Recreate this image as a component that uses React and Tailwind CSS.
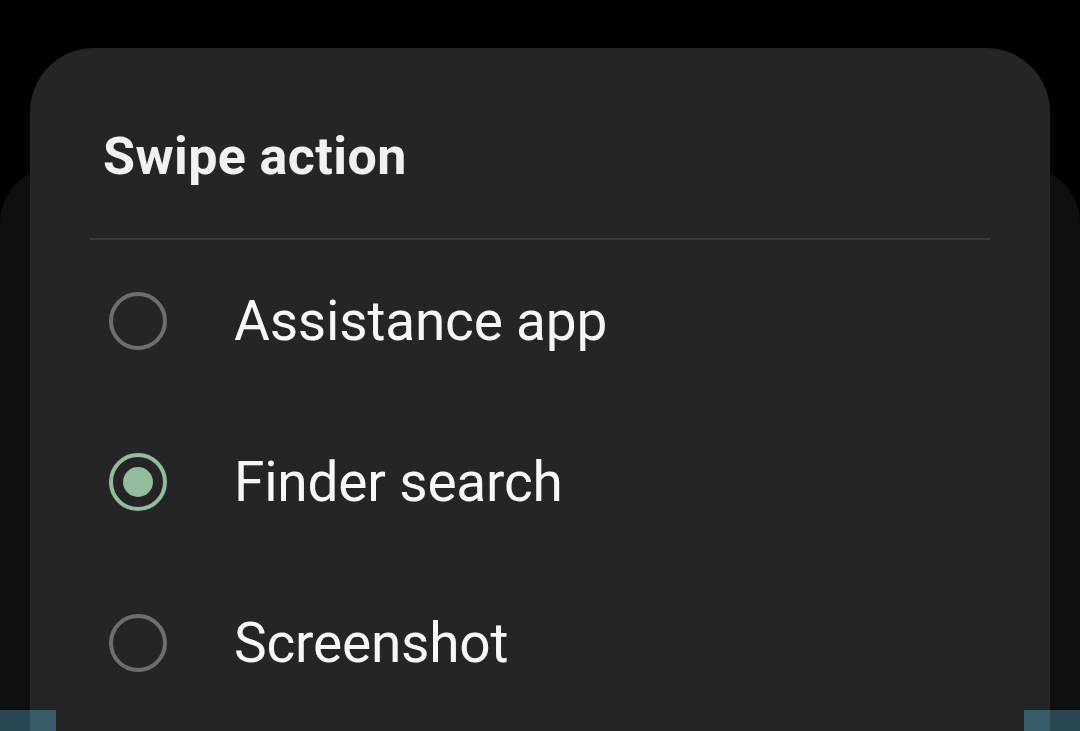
import React from "react"

const options = [
  { id: "assist", label: "Assistance app" },
  { id: "finder", label: "Finder search" },
  { id: "shot", label: "Screenshot" },
]

function Radio({ checked }) {
  if (checked) {
    return (
      <div className="w-[58px] h-[58px] rounded-full border-[4px] border-[#94bb9b] flex items-center justify-center shrink-0">
        <div className="w-[30px] h-[30px] rounded-full bg-[#94bb9b]" />
      </div>
    )
  }
  return <div className="w-[58px] h-[58px] rounded-full border-[4px] border-[#6e6e70] shrink-0" />
}

export default function App() {
  const selected = "finder"

  return (
    <div className="relative h-[731px] w-[1080px] overflow-hidden bg-black font-['Roboto',sans-serif]">
      {/* sheet behind the dialog */}
      <div className="absolute left-0 right-0 top-[167px] h-[700px] rounded-[56px] bg-[#0f0f0f]" />

      {/* dialog */}
      <div className="relative mx-[30px] mt-[48px] h-[800px] rounded-[64px] bg-[#252527]">
        <div className="pt-[79px] pl-[73px]">
          <h2 className="text-[52px] leading-[60px] font-bold text-[#f0f1f1] tracking-[0.4px]">Swipe action</h2>
        </div>
        <div className="mx-[60px] mt-[51px] h-[2px] bg-[#3a3a3c]" />

        <div className="flex flex-col">
          {options.map((opt) => (
            <div key={opt.id} className="flex items-center h-[161px] pl-[79px]">
              <Radio checked={opt.id === selected} />
              <span className="ml-[67px] text-[55px] leading-[60px] text-[#f7f7f7] tracking-[-0.2px]">{opt.label}</span>
            </div>
          ))}
        </div>
      </div>

      {/* teal overlays at the bottom corners */}
      <div className="absolute bottom-0 left-0 h-[21px] w-[56px] flex">
        <div className="w-[30px] bg-[#274650]" />
        <div className="flex-1 bg-[#375b68]" />
      </div>
      <div className="absolute bottom-0 right-0 h-[21px] w-[56px] flex">
        <div className="flex-1 bg-[#375b68]" />
        <div className="w-[30px] bg-[#274650]" />
      </div>
    </div>
  )
}
